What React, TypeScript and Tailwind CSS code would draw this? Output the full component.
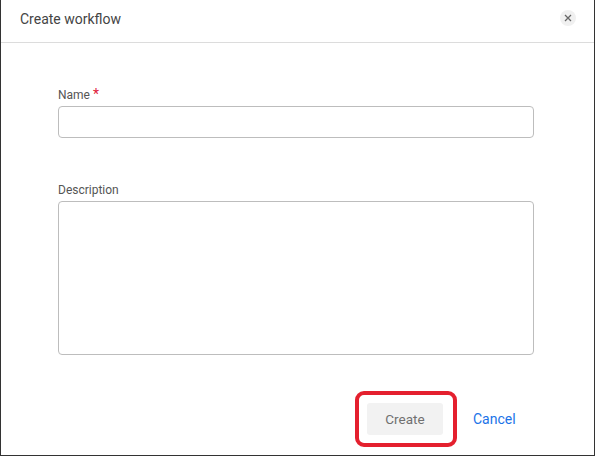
export default function App() {
  return (
    <div
      className="w-[596px] h-[457px] bg-white"
      style={{ fontFamily: "Roboto, 'Liberation Sans', sans-serif" }}
    >
      <div className="w-[595px] h-[456px] border-l border-r border-b border-[#333] flex flex-col">
        {/* Header */}
        <div className="h-[43px] shrink-0 border-b border-[#dcdcdc] flex items-center justify-between pl-[19px] pr-[18px]">
          <span className="text-[14px] text-[#444] mt-[-4px]">Create workflow</span>
          <button className="w-[16px] h-[16px] rounded-full bg-[#f0f0f0] flex items-center justify-center mt-[-6px]">
            <svg width="8" height="8" viewBox="0 0 8 8">
              <path d="M1 1L7 7M7 1L1 7" stroke="#666" strokeWidth="1.3" />
            </svg>
          </button>
        </div>

        {/* Body */}
        <div className="flex flex-col pl-[57px] pt-[44px]">
          <label className="text-[12px] leading-[16px] text-[#555] mb-[3px]">
            Name <span className="text-[14px] leading-[14px] text-[#e0203a]">*</span>
          </label>
          <input className="w-[476px] h-[32px] border border-[#bdbdbd] rounded-[4px] outline-none px-2 text-[13px]" />

          <label className="text-[12px] leading-[16px] text-[#555] mt-[44px] mb-[3px]">
            Description
          </label>
          <textarea className="w-[476px] h-[154px] border border-[#bdbdbd] rounded-[4px] outline-none p-2 text-[13px] resize-none" />
        </div>

        {/* Footer */}
        <div className="flex items-center pl-[354px] mt-[36px]">
          <div className="border-[4px] border-[#e4202e] rounded-[9px] pl-[8px] pr-[10px] py-[8px]">
            <button className="w-[76px] h-[32px] bg-[#f2f2f2] rounded-[3px] text-[13.5px] text-[#707070]">
              Create
            </button>
          </div>
          <button className="ml-[16px] text-[14px] text-[#1a73e8]">Cancel</button>
        </div>
      </div>
    </div>
  );
}
